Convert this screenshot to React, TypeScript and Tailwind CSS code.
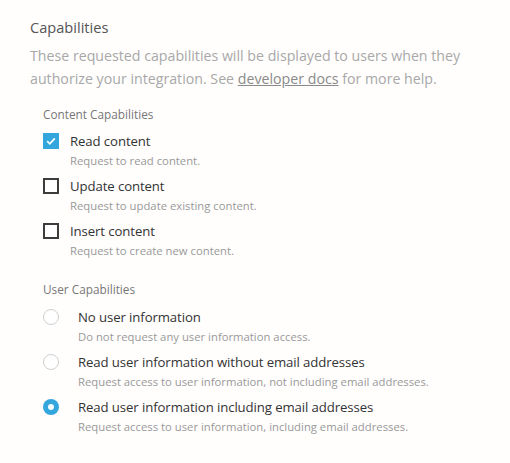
import React from "react";

const font = { fontFamily: '"Open Sans", "Noto Sans", sans-serif' };

function Check({ checked }: { checked: boolean }) {
  return checked ? (
    <div className="w-4 h-4 bg-[#33a6de] flex items-center justify-center shrink-0">
      <svg width="12" height="12" viewBox="0 0 12 12">
        <path d="M2.2 6.2 L4.8 8.8 L9.8 3.4" fill="none" stroke="white" strokeWidth="1.8" />
      </svg>
    </div>
  ) : (
    <div className="w-4 h-4 border-2 border-[#3c3c3c] bg-white shrink-0" />
  );
}

function Radio({ checked }: { checked: boolean }) {
  return checked ? (
    <div className="w-4 h-4 rounded-full bg-[#33a6de] flex items-center justify-center shrink-0">
      <div className="w-[6px] h-[6px] rounded-full bg-[#f4fbff]" />
    </div>
  ) : (
    <div className="w-4 h-4 rounded-full border border-[#cfcfcf] bg-white shrink-0" />
  );
}

const checks = [
  { label: "Read content", sub: "Request to read content.", checked: true },
  { label: "Update content", sub: "Request to update existing content.", checked: false },
  { label: "Insert content", sub: "Request to create new content.", checked: false },
];

const radios = [
  { label: "No user information", sub: "Do not request any user information access.", checked: false },
  { label: "Read user information without email addresses", sub: "Request access to user information, not including email addresses.", checked: false },
  { label: "Read user information including email addresses", sub: "Request access to user information, including email addresses.", checked: true },
];

export default function App() {
  return (
    <div className="w-[510px] h-[463px] bg-[#fffefd] pl-[30px] pt-[16px]" style={font}>
      <div className="text-[14.6px] leading-[22px] text-[#555]">Capabilities</div>
      <div className="mt-[6px] text-[14.2px] leading-[23px] text-[#a8a8a8] w-[460px]">
        These requested capabilities will be displayed to users when they
        <br />
        authorize your integration. See{" "}
        <span className="underline text-[#8a8a8a]">developer docs</span> for more help.
      </div>
      <div className="pl-[13px] mt-[15px]">
        <div className="text-[11.8px] leading-[18px] text-[#777]">Content Capabilities</div>
        <div className="mt-[8px] flex flex-col gap-[5px]">
          {checks.map((c) => (
            <div key={c.label} className="flex flex-col">
              <div className="flex items-center gap-[11px] h-[20px]">
                <Check checked={c.checked} />
                <div className="text-[13.2px] tracking-[-0.1px] leading-[20px] text-[#333]">{c.label}</div>
              </div>
              <div className="pl-[27px] text-[11.3px] leading-[20px] text-[#999]">{c.sub}</div>
            </div>
          ))}
        </div>
        <div className="mt-[19px] text-[11.8px] leading-[18px] text-[#777]">User Capabilities</div>
        <div className="mt-[9px] flex flex-col gap-[5px]">
          {radios.map((c) => (
            <div key={c.label} className="flex flex-col">
              <div className="flex items-center gap-[19px] h-[20px]">
                <Radio checked={c.checked} />
                <div className="text-[13.2px] tracking-[-0.1px] leading-[20px] text-[#333]">{c.label}</div>
              </div>
              <div className="pl-[35px] text-[11.3px] leading-[20px] text-[#999]">{c.sub}</div>
            </div>
          ))}
        </div>
      </div>
    </div>
  );
}
